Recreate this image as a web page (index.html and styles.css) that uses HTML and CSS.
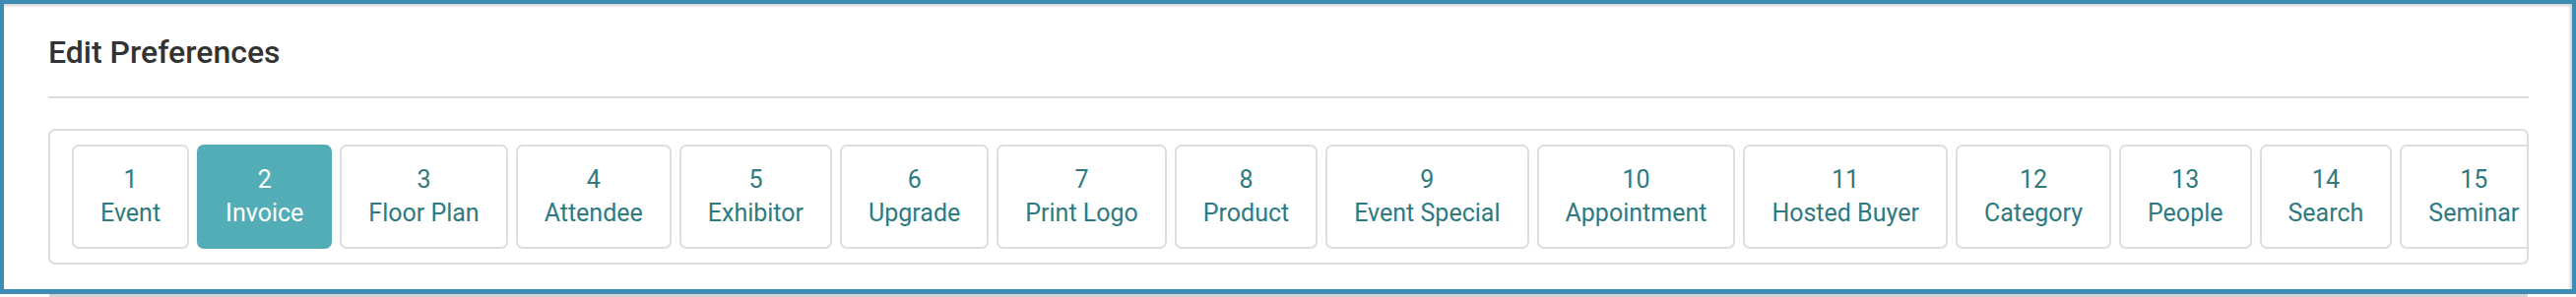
FILE: index.html
```html
<!DOCTYPE html>
<html lang="en">
<head>
<meta charset="utf-8">
<title>Edit Preferences</title>
<link rel="stylesheet" href="styles.css">
</head>
<body>
<div class="frame">
  <h3 class="title">Edit Preferences</h3>
  <div class="rule"></div>
  <div class="steps">
    <div class="step"><span>1</span><span>Event</span></div>
    <div class="step active"><span>2</span><span>Invoice</span></div>
    <div class="step"><span>3</span><span>Floor Plan</span></div>
    <div class="step"><span>4</span><span>Attendee</span></div>
    <div class="step"><span>5</span><span>Exhibitor</span></div>
    <div class="step"><span>6</span><span>Upgrade</span></div>
    <div class="step"><span>7</span><span>Print Logo</span></div>
    <div class="step"><span>8</span><span>Product</span></div>
    <div class="step"><span>9</span><span>Event Special</span></div>
    <div class="step"><span>10</span><span>Appointment</span></div>
    <div class="step"><span>11</span><span>Hosted Buyer</span></div>
    <div class="step"><span>12</span><span>Category</span></div>
    <div class="step"><span>13</span><span>People</span></div>
    <div class="step"><span>14</span><span>Search</span></div>
    <div class="step"><span>15</span><span>Seminar</span></div>
  </div>
</div>
<div class="under"></div>
</body>
</html>
```

FILE: styles.css
```css
html, body {
  margin: 0;
  padding: 0;
  background: #ffffff;
}
body {
  font-family: Roboto, "Liberation Sans", Arial, sans-serif;
  width: 2616px;
  height: 302px;
  overflow: hidden;
}
.frame {
  box-sizing: border-box;
  height: 299px;
  border: 4px solid #3e8bb3;
  border-bottom-width: 5px;
  box-shadow: inset -2px 2px 3px rgba(0, 0, 0, 0.18);
  padding: 29px 44px 0 45px;
  background: #ffffff;
}
.title {
  margin: 0;
  font-size: 32px;
  line-height: 40px;
  font-weight: 500;
  color: #333333;
}
.rule {
  height: 2px;
  background: #dddddd;
  margin-top: 25px;
}
.steps {
  margin-top: 31px;
  box-sizing: border-box;
  height: 138px;
  border: 2px solid #dddddd;
  border-radius: 7px;
  padding: 14px 22px;
  display: flex;
  gap: 8px;
  overflow: hidden;
}
.step {
  flex: 0 0 auto;
  display: flex;
  flex-direction: column;
  align-items: center;
  box-sizing: border-box;
  height: 106px;
  padding: 17px 27px;
  border: 2px solid #dedede;
  border-radius: 7px;
  font-size: 25px;
  line-height: 34px;
  color: #2e7a80;
  background: #ffffff;
  white-space: nowrap;
}
.step.active {
  background: #52adb7;
  border-color: #52adb7;
  color: #ffffff;
}
.under {
  height: 3px;
  margin: 0 49px 0 50px;
  background: #d2d2d2;
}
```
